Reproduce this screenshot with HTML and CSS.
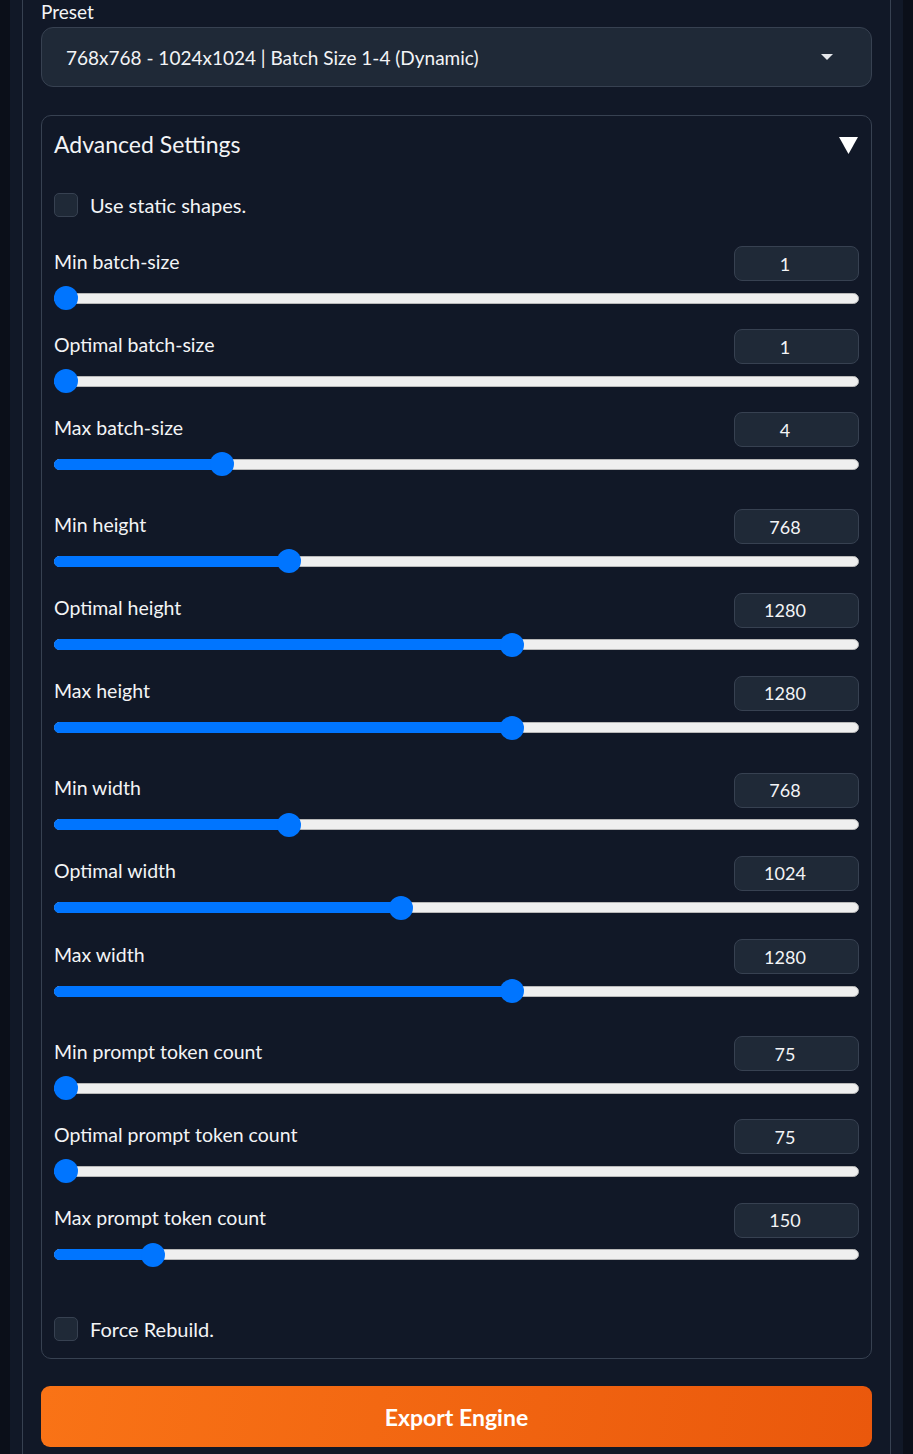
FILE: index.html
```html
<!DOCTYPE html>
<html>
<head>
<meta charset="utf-8">
<link rel="stylesheet" href="styles.css">
</head>
<body>
<div class="outer">
  <div class="block">
    <div class="preset-label">Preset</div>
    <div class="dropdown">
      <span>768x768 - 1024x1024 | Batch Size 1-4 (Dynamic)</span>
      <svg class="caret" width="12" height="7" viewBox="0 0 12 7"><polygon points="0,0 12,0 6,6" fill="#e5e7eb"/></svg>
    </div>

    <div class="accordion">
      <div class="acc-head">
        <span class="acc-title">Advanced Settings</span>
        <svg class="acc-tri" width="19" height="17" viewBox="0 0 19 17"><polygon points="0,0 19,0 9.5,17" fill="#ffffff"/></svg>
      </div>
      <label class="check"><span class="box"></span><span>Use static shapes.</span></label>

      <div class="groups">
        <div class="group">
          <div class="row"><div class="row-head"><span class="lbl">Min batch-size</span><span class="num">1</span></div><div class="slider" style="--p:0"><div class="track"><div class="fill"></div></div><div class="thumb"></div></div></div>
          <div class="row"><div class="row-head"><span class="lbl">Optimal batch-size</span><span class="num">1</span></div><div class="slider" style="--p:0"><div class="track"><div class="fill"></div></div><div class="thumb"></div></div></div>
          <div class="row"><div class="row-head"><span class="lbl">Max batch-size</span><span class="num">4</span></div><div class="slider" style="--p:0.2"><div class="track"><div class="fill"></div></div><div class="thumb"></div></div></div>
        </div>
        <div class="group">
          <div class="row"><div class="row-head"><span class="lbl">Min height</span><span class="num">768</span></div><div class="slider" style="--p:0.2857"><div class="track"><div class="fill"></div></div><div class="thumb"></div></div></div>
          <div class="row"><div class="row-head"><span class="lbl">Optimal height</span><span class="num">1280</span></div><div class="slider" style="--p:0.5714"><div class="track"><div class="fill"></div></div><div class="thumb"></div></div></div>
          <div class="row"><div class="row-head"><span class="lbl">Max height</span><span class="num">1280</span></div><div class="slider" style="--p:0.5714"><div class="track"><div class="fill"></div></div><div class="thumb"></div></div></div>
        </div>
        <div class="group">
          <div class="row"><div class="row-head"><span class="lbl">Min width</span><span class="num">768</span></div><div class="slider" style="--p:0.2857"><div class="track"><div class="fill"></div></div><div class="thumb"></div></div></div>
          <div class="row"><div class="row-head"><span class="lbl">Optimal width</span><span class="num">1024</span></div><div class="slider" style="--p:0.4286"><div class="track"><div class="fill"></div></div><div class="thumb"></div></div></div>
          <div class="row"><div class="row-head"><span class="lbl">Max width</span><span class="num">1280</span></div><div class="slider" style="--p:0.5714"><div class="track"><div class="fill"></div></div><div class="thumb"></div></div></div>
        </div>
        <div class="group">
          <div class="row"><div class="row-head"><span class="lbl">Min prompt token count</span><span class="num">75</span></div><div class="slider" style="--p:0"><div class="track"><div class="fill"></div></div><div class="thumb"></div></div></div>
          <div class="row"><div class="row-head"><span class="lbl">Optimal prompt token count</span><span class="num">75</span></div><div class="slider" style="--p:0"><div class="track"><div class="fill"></div></div><div class="thumb"></div></div></div>
          <div class="row"><div class="row-head"><span class="lbl">Max prompt token count</span><span class="num">150</span></div><div class="slider" style="--p:0.1111"><div class="track"><div class="fill"></div></div><div class="thumb"></div></div></div>
        </div>
      </div>

      <label class="check check-last"><span class="box"></span><span>Force Rebuild.</span></label>
    </div>

    <button class="export">Export Engine</button>
  </div>
</div>
</body>
</html>
```

FILE: styles.css
```css
* { box-sizing: border-box; }
html, body { margin: 0; padding: 0; }
body {
  background: #0b0f19;
  font-family: "Lato", "Noto Sans", sans-serif;
  color: #f3f4f6;
  height: 1454px;
  overflow: hidden;
}
.outer {
  margin: 0 10px;
  background: #111827;
  padding: 0 12px;
  min-height: 1454px;
}
.block {
  border-left: 1px solid #374151;
  border-right: 1px solid #374151;
  padding: 0 18px;
  min-height: 1454px;
}
.preset-label {
  font-size: 19px;
  line-height: 24px;
  height: 27px;
}
.dropdown {
  height: 60px;
  background: #1f2937;
  border: 1px solid #374151;
  border-radius: 12px;
  display: flex;
  align-items: center;
  justify-content: space-between;
  padding: 0 38px 0 24px;
  font-size: 19px;
}
.caret { display: block; }
.accordion {
  margin-top: 28px;
  border: 1px solid #374151;
  border-radius: 10px;
  padding: 12px 12px 15px 12px;
  height: 1244px;
}
.acc-head {
  height: 34px;
  display: flex;
  align-items: center;
  justify-content: space-between;
  padding-right: 1px;
}
.acc-title { font-size: 23px; margin-top: -2px; }
.acc-tri { display: block; }
.check {
  display: flex;
  align-items: center;
  gap: 12px;
  font-size: 20px;
  height: 24px;
  margin-top: 31px;
}
.box {
  width: 24px;
  height: 24px;
  border-radius: 5px;
  background: #1f2937;
  border: 1px solid #374151;
  flex: none;
}
.groups {
  margin-top: 29px;
  display: flex;
  flex-direction: column;
  gap: 33px;
}
.group {
  display: flex;
  flex-direction: column;
  gap: 19.2px;
}
.row {
  display: flex;
  flex-direction: column;
  gap: 5px;
}
.row-head {
  height: 35px;
  display: flex;
  align-items: center;
  justify-content: space-between;
}
.lbl { font-size: 19.5px; margin-bottom: 5px; }
.num {
  width: 125px;
  height: 35px;
  background: #1f2937;
  border: 1px solid #374151;
  border-radius: 8px;
  display: flex;
  align-items: center;
  justify-content: center;
  padding-right: 23px;
  font-size: 18px;
}
.slider {
  position: relative;
  height: 24px;
  display: flex;
  align-items: center;
}
.track {
  position: relative;
  width: 100%;
  height: 11px;
  border-radius: 6px;
  background: #efefef;
  border: 1px solid #b8b8b8;
}
.fill {
  position: absolute;
  left: -1px;
  top: -1px;
  bottom: -1px;
  width: calc(13px + (100% - 22px) * var(--p));
  background: #0075ff;
  border-radius: 6px;
}
.thumb {
  position: absolute;
  top: 0;
  left: calc((100% - 24px) * var(--p));
  width: 24px;
  height: 24px;
  border-radius: 50%;
  background: #0075ff;
}
.check-last { margin-top: 50px; }
.export {
  display: block;
  width: 100%;
  margin-top: 27px;
  height: 61px;
  border: none;
  border-radius: 9px;
  background: linear-gradient(100deg, #f97316, #ea580c);
  color: #ffffff;
  font-family: "Lato", "Noto Sans", sans-serif;
  font-weight: 700;
  font-size: 23px;
}
```
